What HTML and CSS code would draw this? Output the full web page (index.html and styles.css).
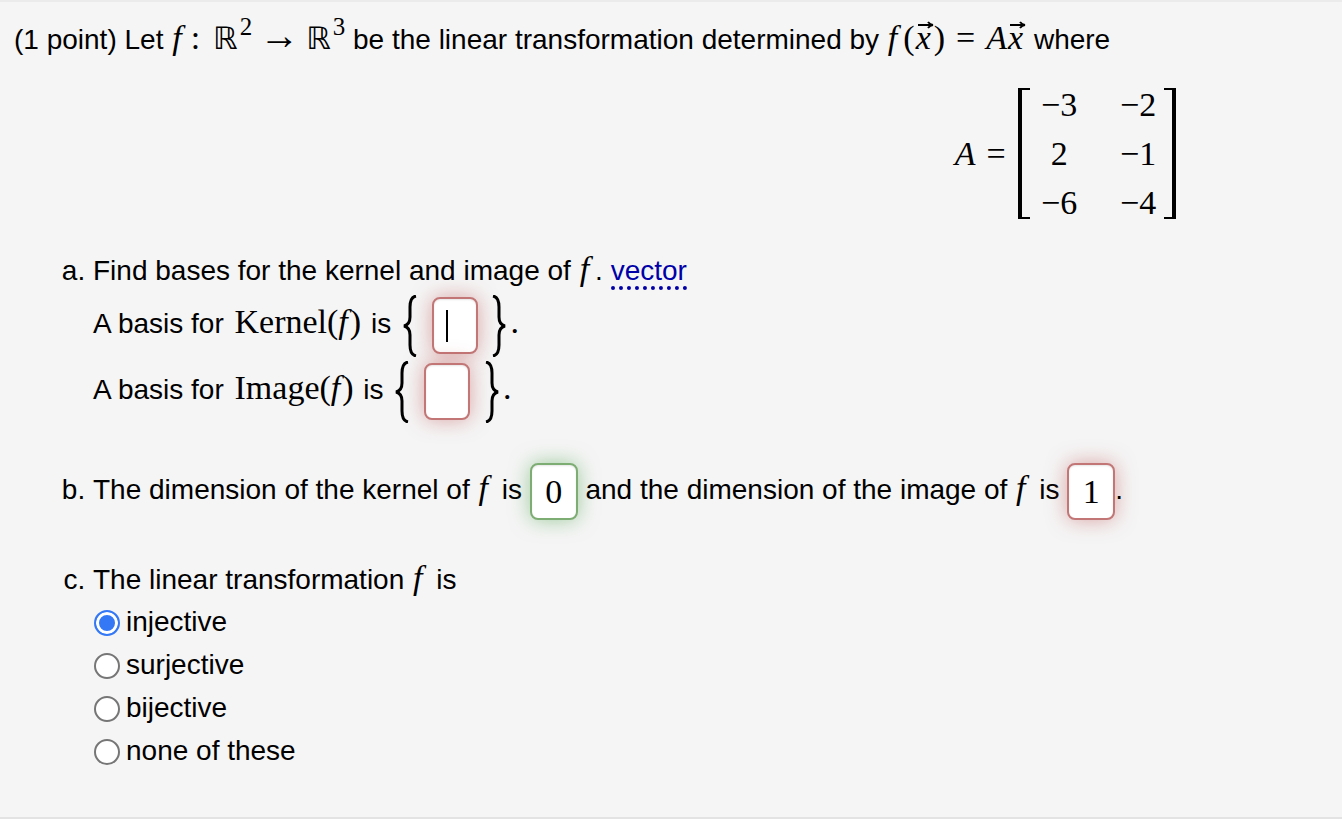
FILE: index.html
```html
<!DOCTYPE html>
<html lang="en">
<head>
  <meta charset="UTF-8">
  <title>Linear transformation</title>
  <link rel="stylesheet" href="styles.css">
</head>
<body>
  <form class="problem">
    <p>(1 point) Let <span class="math"><i class="fn">f</i><span class="colon">:</span><span class="set">ℝ</span><sup>2</sup><span class="arrow">→</span><span class="set">ℝ</span><sup>3</sup></span> be the linear transformation determined by <span class="math"><i class="fn">f</i>(<i class="vec">x<svg viewBox="0 0 16 8"><path d="M0 4H14M10 1Q12 3.6 15 4Q12 4.4 10 7"/></svg></i>)<span class="rel">=</span><i>A</i><i class="vec">x<svg viewBox="0 0 16 8"><path d="M0 4H14M10 1Q12 3.6 15 4Q12 4.4 10 7"/></svg></i></span> where</p>

    <div class="equation math">
      <span><i>A</i><span class="eq">=</span></span>
      <table class="matrix">
        <tr><td>−3</td><td>−2</td></tr>
        <tr><td>2</td><td>−1</td></tr>
        <tr><td>−6</td><td>−4</td></tr>
      </table>
    </div>

    <ol class="parts">
      <li>
        <p>Find bases for the kernel and image of <span class="math"><i class="fn">f</i></span>. <a class="hint" href="#vector">vector</a></p>
        <p class="basis">A basis for <span class="math name">Kernel(<i class="arg">f</i>)</span> is
          <svg class="brace" viewBox="0 0 14 62"><path d="M13 1C8 2 7 6 7 12V22C7 27 5 30 1 31C5 32 7 35 7 40V50C7 56 8 60 13 61"/></svg>
          <input class="answer wrong active" type="text" aria-label="Kernel basis">
          <svg class="brace" viewBox="0 0 14 62"><path d="M1 1C6 2 7 6 7 12V22C7 27 9 30 13 31C9 32 7 35 7 40V50C7 56 6 60 1 61"/></svg><span class="math">.</span></p>
        <p class="basis">A basis for <span class="math name">Image(<i class="arg">f</i>)</span> is
          <svg class="brace" viewBox="0 0 14 62"><path d="M13 1C8 2 7 6 7 12V22C7 27 5 30 1 31C5 32 7 35 7 40V50C7 56 8 60 13 61"/></svg>
          <input class="answer wrong" type="text" aria-label="Image basis">
          <svg class="brace" viewBox="0 0 14 62"><path d="M1 1C6 2 7 6 7 12V22C7 27 9 30 13 31C9 32 7 35 7 40V50C7 56 6 60 1 61"/></svg><span class="math">.</span></p>
      </li>
      <li>
        <p>The dimension of the kernel of <span class="math"><i class="fn">f</i></span> is <input class="answer right" type="text" value="0" aria-label="Dimension of the kernel"> and the dimension of the image of <span class="math"><i class="fn">f</i></span> is <input class="answer wrong" type="text" value="1" aria-label="Dimension of the image">.</p>
      </li>
      <li>
        <p>The linear transformation <span class="math"><i class="fn">f</i></span> is</p>
        <label class="choice"><input type="radio" name="kind" checked>injective</label>
        <label class="choice"><input type="radio" name="kind">surjective</label>
        <label class="choice"><input type="radio" name="kind">bijective</label>
        <label class="choice"><input type="radio" name="kind">none of these</label>
      </li>
    </ol>
  </form>
</body>
</html>
```
FILE: styles.css
```css
body {
  margin: 0;
  background: #fff;
  color: #000;
  font-family: "Liberation Sans", Arial, sans-serif;
  font-size: 28px;
  line-height: 40px;
}

.problem {
  padding: 18px 14px 45px;
  background: #f5f5f5;
  border-top: 2px solid #ebebeb;
  border-bottom: 2px solid #e3e3e3;
}

p {
  margin: 0;
}

/* Math */
.math {
  font-family: "Liberation Serif", "Times New Roman", serif;
  font-size: 34px;
  line-height: 1;
}

.fn {
  margin: 0 6px 0 1px;
}

.name {
  margin: 0 2px 0 3px;
}

.arg {
  margin-right: 2px;
}

.rel {
  margin: 0 11px;
}

.colon {
  margin: 0 13px 0 3px;
}

.set {
  font-family: "DejaVu Sans", sans-serif;
  font-size: 31px;
  line-height: 0;
}

.math sup {
  font-size: 25px;
  line-height: 0;
  vertical-align: 14px;
  margin-left: 2px;
}

.arrow {
  font-size: 40px;
  line-height: 0;
  margin: 0 7px;
}

.vec {
  position: relative;
  margin: 0 3px 0 1px;
}

.vec svg {
  position: absolute;
  left: 2px;
  top: 2px;
  width: 16px;
  height: 8px;
}

.vec path {
  fill: none;
  stroke: #000;
  stroke-width: 2;
}

.equation {
  display: flex;
  justify-content: center;
  align-items: center;
  gap: 12px;
  margin-top: 20px;
  padding-left: 60%;
}

.eq {
  margin-left: 11px;
}

.matrix {
  position: relative;
  border-collapse: collapse;
  text-align: center;
}

/* Square brackets */
.matrix::before,
.matrix::after {
  content: "";
  position: absolute;
  top: 8px;
  bottom: 8px;
  width: 8px;
  border: 2px solid #000;
}

.matrix::before {
  left: 0;
  border-left-width: 4px;
  border-right: 0;
}

.matrix::after {
  right: 0;
  border-right-width: 4px;
  border-left: 0;
}

.matrix td {
  width: 75px;
  height: 49px;
  padding: 0 0 0 4px;
}

/* Question parts */
.parts {
  list-style: lower-alpha;
  margin: 24px 0 0;
  padding-left: 79px;
}

.parts li + li {
  margin-top: 40px;
}

.hint {
  color: #0000a8;
  text-decoration: none;
  border-bottom: 4px dotted #0000a8;
}

.basis {
  line-height: 66px;
}

.brace {
  width: 14px;
  height: 62px;
  margin: 0 4px;
  vertical-align: middle;
}

.brace path {
  fill: none;
  stroke: #000;
  stroke-width: 3;
}

.answer {
  box-sizing: border-box;
  width: 48px;
  height: 57px;
  padding: 0;
  border: 2px solid;
  border-radius: 8px;
  background: #fff;
  color: #000;
  font-family: "Liberation Serif", serif;
  font-size: 34px;
  text-align: center;
  vertical-align: middle;
}

.basis .answer {
  width: 46px;
  margin: 0 3px;
}

.wrong {
  border-color: #c27676;
  box-shadow: 0 0 20px rgba(191, 84, 84, 0.5), inset 0 1px 2px rgba(0, 0, 0, 0.1);
}

.right {
  border-color: #7ead74;
  box-shadow: 0 0 20px rgba(70, 160, 70, 0.5), inset 0 1px 2px rgba(0, 0, 0, 0.1);
}

/* Text cursor of the field being edited */
.active {
  background: linear-gradient(#000, #000) 12px center / 2px 32px no-repeat #fff;
}

.choice {
  display: flex;
  align-items: center;
  gap: 6px;
  height: 43px;
}

.choice input {
  appearance: none;
  box-sizing: border-box;
  width: 26px;
  height: 26px;
  margin: 2px 0 0 1px;
  border: 2px solid #767676;
  border-radius: 50%;
  background: #fff;
}

.choice input:checked {
  border-color: #3478f6;
  background: #3478f6;
  box-shadow: inset 0 0 0 3px #fff;
}
```
